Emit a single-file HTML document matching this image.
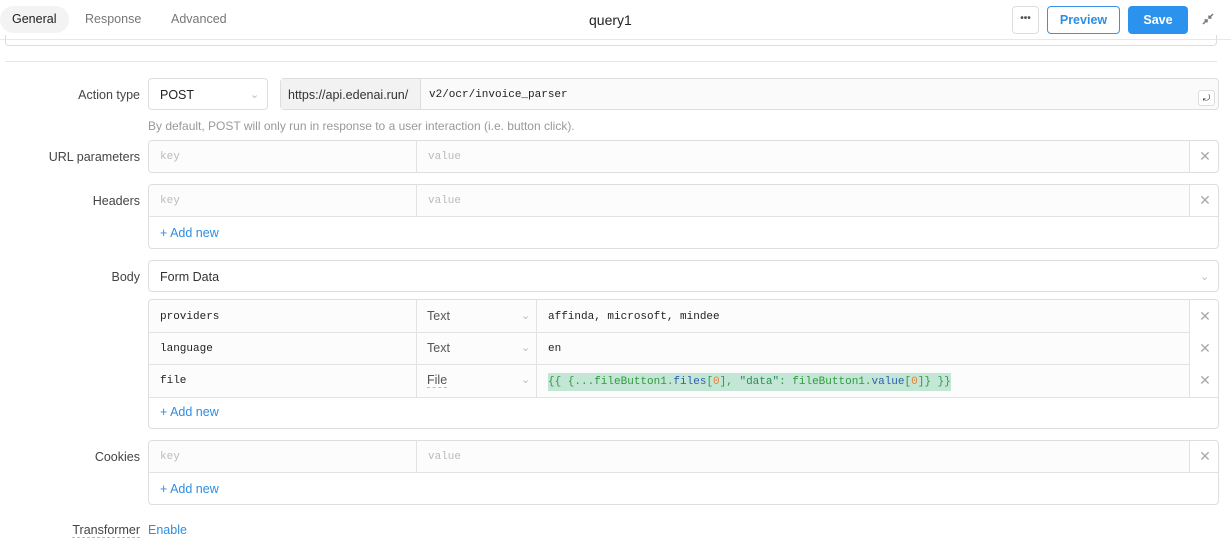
<!DOCTYPE html>
<html><head><meta charset="utf-8"><style>
*{box-sizing:border-box;margin:0;padding:0}
body{width:1231px;height:544px;overflow:hidden;background:#fff;font-family:"Liberation Sans",sans-serif;font-size:12.5px;color:#333;position:relative}
.a{position:absolute}
.lbl{position:absolute;right:1091px;font-size:12.5px;color:#444;white-space:nowrap}
.box{position:absolute;border:1px solid #dedede;border-radius:4px;background:#fff;overflow:hidden}
.cell{position:absolute;background:#fcfcfc;border-right:1px solid #e2e2e2;border-bottom:1px solid #e2e2e2}
.mono{font-family:"Liberation Mono",monospace;font-size:11px}
.ph{color:#bbb}
.x{position:absolute;width:30px;text-align:center;color:#aaa;font-size:14px}
.add{position:absolute;left:11px;color:#2f8ee0;font-size:12.5px}
.chev{position:absolute;color:#bbb;font-size:11px}
</style></head><body>
<div class="a" style="left:0;top:6px;width:69px;height:27px;background:#f3f3f3;border-radius:14px"></div>
<div class="a" style="left:12px;top:12px;font-size:12.5px;color:#222">General</div>
<div class="a" style="left:85px;top:12px;font-size:12.5px;color:#777">Response</div>
<div class="a" style="left:171px;top:12px;font-size:12.5px;color:#777">Advanced</div>
<div class="a" style="left:589px;top:12px;font-size:14px;color:#222">query1</div>
<div class="a" style="left:1012px;top:6px;width:27px;height:28px;border:1px solid #ddd;border-radius:4px;text-align:center;line-height:24px;color:#555;font-weight:bold;font-size:10px">•••</div>
<div class="a" style="left:1047px;top:6px;width:73px;height:28px;border:1px solid #3a93e6;border-radius:4px;text-align:center;line-height:26px;color:#2f8ee0;font-weight:bold">Preview</div>
<div class="a" style="left:1128px;top:6px;width:60px;height:28px;background:#2b93ed;border-radius:4px;text-align:center;line-height:28px;color:#fff;font-weight:bold">Save</div>
<svg class="a" style="left:1202px;top:13px" width="12" height="12" viewBox="0 0 12 12"><path d="M1 11L5 7M2.5 7H5V9.5M11 1L7 5M7 2.5V5H9.5" stroke="#777" stroke-width="1.5" fill="none"/></svg>
<div class="a" style="left:0;top:39px;width:1231px;border-top:1px solid #e8e8e8"></div>
<div class="a" style="left:5px;top:35px;width:1212px;height:11px;border:1px solid #ddd;border-top:none;border-radius:0 0 4px 4px"></div>
<div class="a" style="left:5px;top:61px;width:1212px;border-top:1px solid #e6e6e6"></div>

<div class="lbl" style="top:88px">Action type</div>
<div class="box" style="left:148px;top:78px;width:120px;height:32px"></div>
<div class="a" style="left:160px;top:88px;color:#222">POST</div>
<div class="chev" style="left:250px;top:88px">⌄</div>
<div class="box" style="left:280px;top:78px;width:939px;height:32px;background:#fafafa"></div>
<div class="a" style="left:281px;top:79px;width:140px;height:30px;background:#f2f2f2;border-right:1px solid #ddd"></div>
<div class="a" style="left:288px;top:88px;color:#333">https://api.edenai.run/</div>
<div class="a mono" style="left:429px;top:89px;color:#222">v2/ocr/invoice_parser</div>
<div class="a" style="left:1198px;top:90px;width:17px;height:16px;border:1px solid #ddd;border-radius:3px;background:#fff;font-size:9px;text-align:center;line-height:14px;color:#333">⤾</div>
<div class="a" style="left:148px;top:119px;color:#999;font-size:12px">By default, POST will only run in response to a user interaction (i.e. button click).</div>

<div class="lbl" style="top:150px">URL parameters</div>
<div class="box" style="left:148px;top:140px;width:1071px;height:33px">
 <div class="cell" style="left:0;top:0;width:268px;height:32px;border-bottom:none"></div>
 <div class="cell" style="left:268px;top:0;width:773px;height:32px;border-bottom:none"></div>
 <div class="a mono ph" style="left:11px;top:10px">key</div>
 <div class="a mono ph" style="left:279px;top:10px">value</div>
 <div class="x" style="left:1041px;top:7px">✕</div>
</div>

<div class="lbl" style="top:194px">Headers</div>
<div class="box" style="left:148px;top:184px;width:1071px;height:65px">
 <div class="cell" style="left:0;top:0;width:268px;height:32px"></div>
 <div class="cell" style="left:268px;top:0;width:773px;height:32px"></div>
 <div class="a" style="left:1041px;top:31px;width:30px;border-bottom:1px solid #e2e2e2"></div>
 <div class="a mono ph" style="left:11px;top:10px">key</div>
 <div class="a mono ph" style="left:279px;top:10px">value</div>
 <div class="x" style="left:1041px;top:7px">✕</div>
 <div class="add" style="top:41px">+ Add new</div>
</div>

<div class="lbl" style="top:270px">Body</div>
<div class="box" style="left:148px;top:260px;width:1071px;height:32px"></div>
<div class="a" style="left:160px;top:270px;color:#333">Form Data</div>
<div class="chev" style="left:1200px;top:270px">⌄</div>

<div class="box" style="left:148px;top:299px;width:1071px;height:130px">
 <div class="cell" style="left:0;top:0;width:268px;height:33px"></div>
 <div class="cell" style="left:268px;top:0;width:120px;height:33px"></div>
 <div class="cell" style="left:388px;top:0;width:653px;height:33px"></div>
 <div class="cell" style="left:0;top:33px;width:268px;height:32px"></div>
 <div class="cell" style="left:268px;top:33px;width:120px;height:32px"></div>
 <div class="cell" style="left:388px;top:33px;width:653px;height:32px"></div>
 <div class="cell" style="left:0;top:65px;width:268px;height:33px"></div>
 <div class="cell" style="left:268px;top:65px;width:120px;height:33px"></div>
 <div class="cell" style="left:388px;top:65px;width:653px;height:33px"></div>
 <div class="a" style="left:1041px;top:97px;width:30px;border-bottom:1px solid #e2e2e2"></div>
 <div class="a mono" style="left:11px;top:11px;color:#222">providers</div>
 <div class="a mono" style="left:11px;top:43px;color:#222">language</div>
 <div class="a mono" style="left:11px;top:75px;color:#222">file</div>
 <div class="a" style="left:278px;top:9px;color:#555">Text</div>
 <div class="a" style="left:278px;top:41px;color:#555">Text</div>
 <div class="a" style="left:278px;top:73px;color:#555;border-bottom:1px dashed #bbb">File</div>
 <div class="chev" style="left:372px;top:9px">⌄</div>
 <div class="chev" style="left:372px;top:41px">⌄</div>
 <div class="chev" style="left:372px;top:73px">⌄</div>
 <div class="a mono" style="left:399px;top:11px;color:#222">affinda, microsoft, mindee</div>
 <div class="a mono" style="left:399px;top:43px;color:#222">en</div>
 <div class="a mono" style="left:399px;top:73px;height:18px;line-height:18px;background:#c4e6d6;color:#2e9b3e;white-space:pre">{{ {...fileButton1.<span style="color:#2c5fae">files</span>[<span style="color:#e0843a">0</span>], <span style="color:#2e8b57">"data"</span>: fileButton1.<span style="color:#2c5fae">value</span>[<span style="color:#e0843a">0</span>]} }}</div>
 <div class="x" style="left:1041px;top:8px">✕</div>
 <div class="x" style="left:1041px;top:40px">✕</div>
 <div class="x" style="left:1041px;top:72px">✕</div>
 <div class="add" style="top:105px">+ Add new</div>
</div>

<div class="lbl" style="top:450px">Cookies</div>
<div class="box" style="left:148px;top:440px;width:1071px;height:65px">
 <div class="cell" style="left:0;top:0;width:268px;height:32px"></div>
 <div class="cell" style="left:268px;top:0;width:773px;height:32px"></div>
 <div class="a" style="left:1041px;top:31px;width:30px;border-bottom:1px solid #e2e2e2"></div>
 <div class="a mono ph" style="left:11px;top:10px">key</div>
 <div class="a mono ph" style="left:279px;top:10px">value</div>
 <div class="x" style="left:1041px;top:7px">✕</div>
 <div class="add" style="top:41px">+ Add new</div>
</div>

<div class="lbl" style="top:523px;border-bottom:1px dashed #bbb">Transformer</div>
<div class="a" style="left:148px;top:523px;color:#2f8ee0">Enable</div>
</body></html>
